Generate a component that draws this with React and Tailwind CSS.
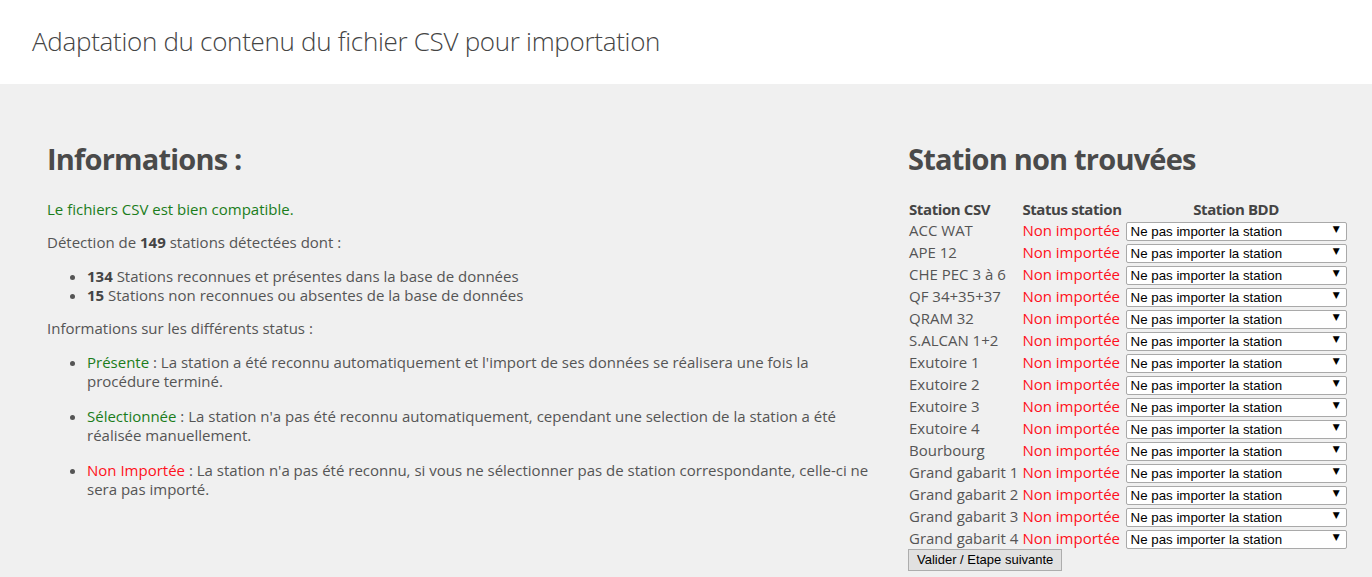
const rows = [
  "ACC WAT",
  "APE 12",
  "CHE PEC 3 à 6",
  "QF 34+35+37",
  "QRAM 32",
  "S.ALCAN 1+2",
  "Exutoire 1",
  "Exutoire 2",
  "Exutoire 3",
  "Exutoire 4",
  "Bourbourg",
  "Grand gabarit 1",
  "Grand gabarit 2",
  "Grand gabarit 3",
  "Grand gabarit 4",
]

function StationSelect() {
  return (
    <div className="relative w-[221px] h-[19px] -translate-y-[1px]">
      <select className="appearance-none w-full h-full bg-white border border-[#a9a9a9] rounded-[2px] pl-[4px] text-[13.3px] leading-[17px] text-black font-['Liberation_Sans',Arial,sans-serif] outline-none">
        <option>Ne pas importer la station</option>
      </select>
      <span className="pointer-events-none absolute right-[7px] top-[3px] text-[9px] leading-[12px] text-black font-['DejaVu_Sans',sans-serif]">▼</span>
    </div>
  )
}

export default function App() {
  return (
    <div className="min-h-[577px] bg-[#f0f0f0] text-[#555] font-['Open_Sans',sans-serif]">
      <header className="bg-white h-[84px] flex items-center pl-[32px]">
        <h1 className="text-[26px] font-light tracking-[-0.3px] text-[#444] pb-[2px]">Adaptation du contenu du fichier CSV pour importation</h1>
      </header>

      <div className="flex pl-[47px] pt-[57px]">
        <section className="w-[861px] pr-[30px] text-[15px] leading-[19px]">
          <h2 className="text-[29px] leading-[36px] font-bold text-[#4a4a4a] tracking-[-0.8px]">Informations :</h2>
          <p className="mt-[23px] text-[#1b7d1b]">Le fichiers CSV est bien compatible.</p>
          <p className="mt-[14px]">
            Détection de <b className="text-[#444]">149</b> stations détectées dont :
          </p>
          <ul className="mt-[15px] pl-[40px] list-disc">
            <li><b className="text-[#444]">134</b> Stations reconnues et présentes dans la base de données</li>
            <li><b className="text-[#444]">15</b> Stations non reconnues ou absentes de la base de données</li>
          </ul>
          <p className="mt-[14px]">Informations sur les différents status :</p>
          <ul className="mt-[15px] pl-[40px] list-disc space-y-[16px]">
            <li>
              <span className="text-[#1b7d1b]">Présente</span> : La station a été reconnu automatiquement et l'import de ses données se réalisera une fois la procédure terminé.
            </li>
            <li>
              <span className="text-[#1b7d1b]">Sélectionnée</span> : La station n'a pas été reconnu automatiquement, cependant une selection de la station a été réalisée manuellement.
            </li>
            <li>
              <span className="text-[#ff1020]">Non Importée</span> : La station n'a pas été reconnu, si vous ne sélectionner pas de station correspondante, celle-ci ne sera pas importé.
            </li>
          </ul>
        </section>

        <section className="flex-1">
          <h2 className="text-[29px] leading-[36px] font-bold text-[#4a4a4a] tracking-[-0.8px]">Station non trouvées</h2>
          <table className="mt-[22px] text-[15px] border-separate border-spacing-[2px] -ml-[2px]">
            <thead>
              <tr className="h-[17px] leading-[17px]">
                <th className="px-[1px] text-left font-bold text-[#444] tracking-[-0.4px]">Station CSV</th>
                <th className="px-[1px] text-left font-bold text-[#444] tracking-[-0.4px]">Status station</th>
                <th className="px-[1px] text-center font-bold text-[#444] tracking-[-0.4px]">Station BDD</th>
              </tr>
            </thead>
            <tbody>
              {rows.map((name) => (
                <tr key={name} className="h-[20px] leading-[20px]">
                  <td className="px-[1px] whitespace-nowrap">{name}</td>
                  <td className="px-[1px] whitespace-nowrap text-[#ff1020]">Non importée</td>
                  <td className="px-[1px]"><StationSelect /></td>
                </tr>
              ))}
            </tbody>
          </table>
          <button className="block -mt-[1px] h-[22px] px-[8px] bg-[#e1e1e1] border border-[#adadad] text-[13px] text-black font-['Liberation_Sans',Arial,sans-serif]">
            Valider / Etape suivante
          </button>
        </section>
      </div>
    </div>
  )
}
